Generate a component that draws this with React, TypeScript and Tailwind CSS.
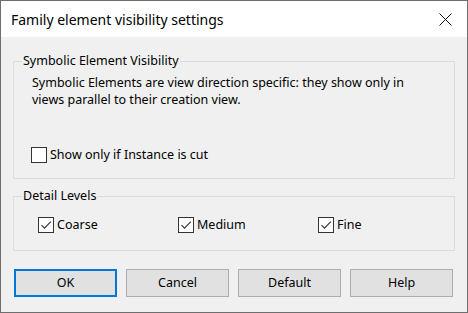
import React from "react";

const font = { fontFamily: '"Noto Sans", sans-serif' };

function Check({ checked }: { checked: boolean }) {
  return (
    <span className="w-[16px] h-[16px] border border-[#333333] bg-white flex items-center justify-center shrink-0">
      {checked && (
        <svg width="12" height="12" viewBox="0 0 12 12">
          <path d="M1.5 6.2 L4.5 9.2 L10.8 2.6" fill="none" stroke="#333333" strokeWidth="1.1" />
        </svg>
      )}
    </span>
  );
}

function CheckItem({ label, checked }: { label: string; checked: boolean }) {
  return (
    <label className="flex items-center gap-[3px] text-[12.5px] leading-[16px] text-black whitespace-nowrap">
      <Check checked={checked} />
      <span>{label}</span>
    </label>
  );
}

function Btn({ label, primary }: { label: string; primary?: boolean }) {
  return (
    <button
      className={
        "w-[103px] h-[28px] bg-[#e1e1e1] text-[12.5px] text-black flex items-center justify-center " +
        (primary ? "border-2 border-[#0078d7]" : "border border-[#adadad]")
      }
    >
      {label}
    </button>
  );
}

export default function App() {
  return (
    <div className="w-[468px] h-[313px] border border-[#6e6e6e] bg-[#f0f0f0] flex flex-col" style={font}>
      <div className="h-[36px] bg-white flex items-center justify-between pl-[10px] pr-[15px]">
        <span className="text-[14px] text-black whitespace-nowrap">Family element visibility settings</span>
        <svg width="13" height="13" viewBox="0 0 13 13">
          <path d="M0.5 0.5 L12.5 12.5 M12.5 0.5 L0.5 12.5" stroke="#111" strokeWidth="1" />
        </svg>
      </div>
      <div className="flex flex-col px-[12px] pt-[24px]">
        <div className="relative h-[118px] border border-[#dcdcdc]">
          <span className="absolute -top-[10px] left-[8px] px-[1px] bg-[#f0f0f0] text-[12.5px] leading-[18px] text-black whitespace-nowrap">
            Symbolic Element Visibility
          </span>
          <div className="pl-[18px] pt-[12px] text-[12.5px] leading-[17px] text-black whitespace-nowrap">
            Symbolic Elements are view direction specific: they show only in
            <br />
            views parallel to their creation view.
          </div>
          <div className="pl-[17px] pt-[39px]">
            <CheckItem label="Show only if Instance is cut" checked={false} />
          </div>
        </div>
        <div className="relative h-[55px] mt-[17px] border border-[#dcdcdc]">
          <span className="absolute -top-[10px] left-[8px] px-[1px] bg-[#f0f0f0] text-[12.5px] leading-[18px] text-black whitespace-nowrap">
            Detail Levels
          </span>
          <div className="flex pl-[24px] pt-[20px]">
            <div className="w-[140px]"><CheckItem label="Coarse" checked /></div>
            <div className="w-[140px]"><CheckItem label="Medium" checked /></div>
            <div><CheckItem label="Fine" checked /></div>
          </div>
        </div>
        <div className="flex gap-[9px] mt-[18px] pl-[1px]">
          <Btn label="OK" primary />
          <Btn label="Cancel" />
          <Btn label="Default" />
          <Btn label="Help" />
        </div>
      </div>
    </div>
  );
}
